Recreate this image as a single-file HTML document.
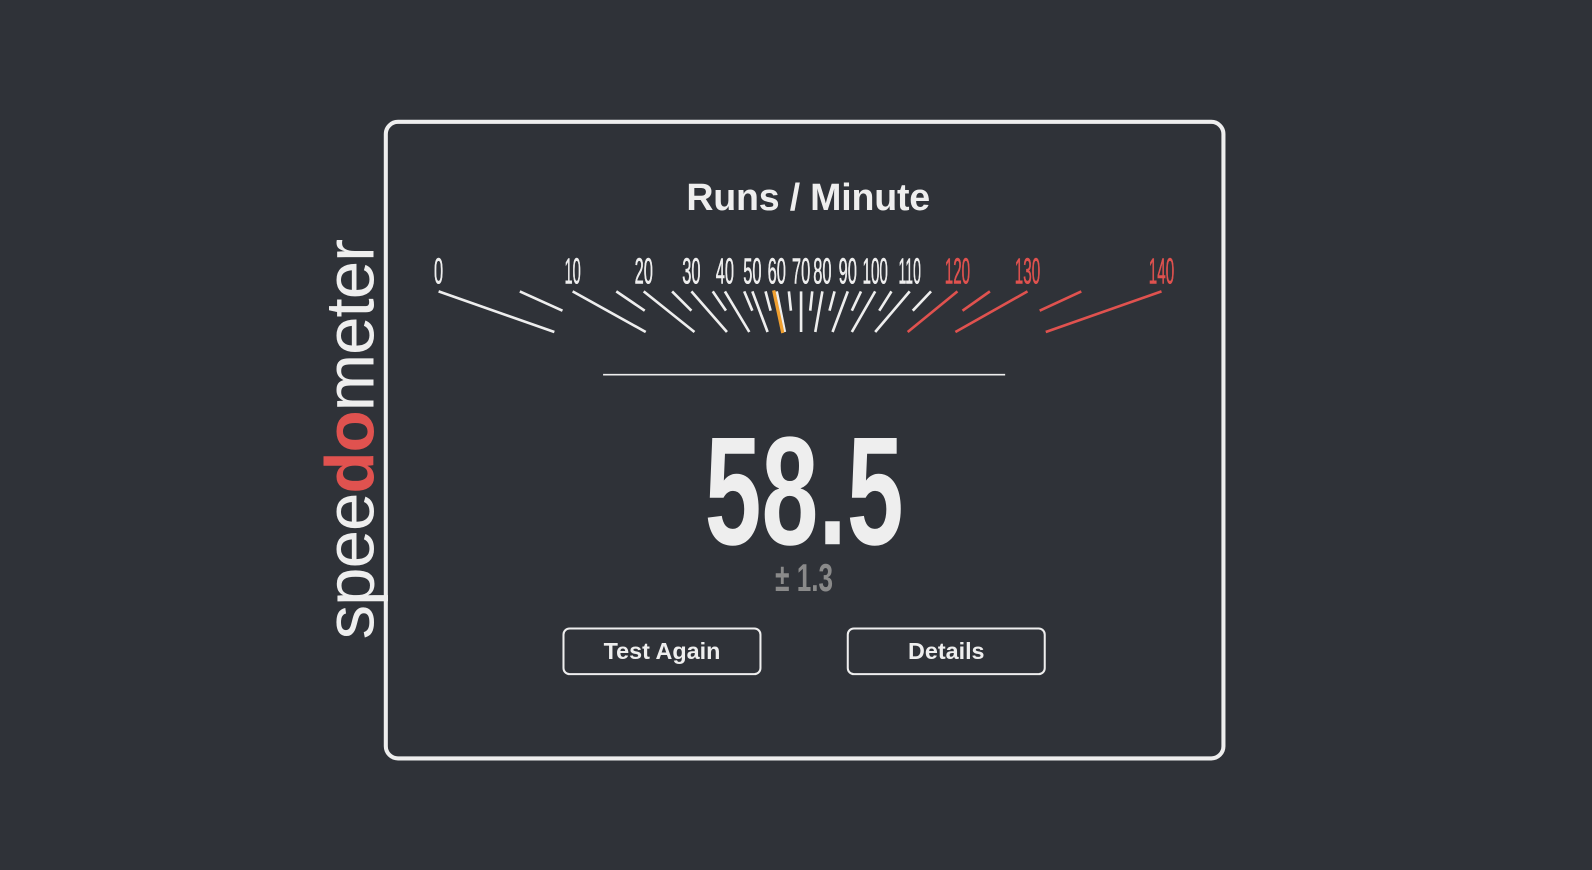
<!DOCTYPE html>
<html><head><meta charset="utf-8"><style>
html,body{margin:0;padding:0;background:#2f3238;width:1592px;height:857px;overflow:hidden;font-family:"Liberation Sans",sans-serif;}
#w{position:absolute;left:0;top:0;width:1592px;height:857px;transform:scale(1.0153);transform-origin:0 0;}
.box{position:absolute;left:378px;top:118px;width:821px;height:623px;border:4px solid #eeeeee;border-radius:14px;}
.title{position:absolute;left:0;width:1592px;top:174px;text-align:center;color:#eee;font-size:37px;font-weight:bold;letter-spacing:-0.2px;}
.btn{position:absolute;top:618px;width:192px;height:43px;border:2px solid #eee;border-radius:7px;color:#eee;font-size:23px;font-weight:bold;text-align:center;line-height:43px;}
.brand{position:absolute;left:345px;top:433px;transform:translate(-50%,-50%) rotate(-90deg);color:#eee;font-size:68px;white-space:nowrap;letter-spacing:-1px;}
.brand b{color:#e0524f;}
</style></head><body><div id="w">
<div class="box"></div>
<div class="brand">spee<b>do</b>meter</div>
<div class="title">Runs / Minute</div>
<svg width="1592" height="857" style="position:absolute;left:0;top:0">
<g stroke="#eeeeee" stroke-width="2.6" stroke-linecap="butt">
<line x1="432" y1="287" x2="546" y2="327"/>
<line x1="564" y1="287" x2="636" y2="327"/>
<line x1="634" y1="287" x2="684" y2="327"/>
<line x1="681" y1="287" x2="716" y2="327"/>
<line x1="714" y1="287" x2="738" y2="327"/>
<line x1="741" y1="287" x2="756" y2="327"/>
<line x1="765" y1="287" x2="773" y2="327"/>
<line x1="789" y1="287" x2="789" y2="327"/>
<line x1="810" y1="287" x2="803" y2="327"/>
<line x1="835" y1="287" x2="820" y2="327"/>
<line x1="862" y1="287" x2="839" y2="327"/>
<line x1="896" y1="287" x2="862" y2="327"/>
<line x1="512" y1="287" x2="554" y2="306"/>
<line x1="607" y1="287" x2="635" y2="306"/>
<line x1="662" y1="287" x2="681" y2="306"/>
<line x1="702" y1="287" x2="715" y2="306"/>
<line x1="733" y1="287" x2="741" y2="306"/>
<line x1="754" y1="287" x2="759" y2="306"/>
<line x1="777" y1="287" x2="779" y2="306"/>
<line x1="800" y1="287" x2="798" y2="306"/>
<line x1="822" y1="287" x2="817" y2="306"/>
<line x1="848" y1="287" x2="839" y2="306"/>
<line x1="878" y1="287" x2="866" y2="306"/>
<line x1="917" y1="287" x2="899" y2="306"/>
</g>
<g stroke="#e0524f" stroke-width="2.6">
<line x1="943" y1="287" x2="894" y2="327"/>
<line x1="1012" y1="287" x2="941" y2="327"/>
<line x1="1144" y1="287" x2="1030" y2="327"/>
<line x1="975" y1="287" x2="948" y2="306"/>
<line x1="1065" y1="287" x2="1024" y2="306"/>
</g>
<line x1="762" y1="286" x2="771" y2="328" stroke="#f0a030" stroke-width="3.2"/>
<g font-family="Liberation Sans, sans-serif" font-size="36" fill="#eeeeee" stroke="#eeeeee" stroke-width="0.6" text-anchor="middle">
<text x="432" y="279" textLength="9" lengthAdjust="spacingAndGlyphs">0</text>
<text x="564" y="279" textLength="16" lengthAdjust="spacingAndGlyphs">10</text>
<text x="634" y="279" textLength="18" lengthAdjust="spacingAndGlyphs">20</text>
<text x="681" y="279" textLength="18" lengthAdjust="spacingAndGlyphs">30</text>
<text x="714" y="279" textLength="18" lengthAdjust="spacingAndGlyphs">40</text>
<text x="741" y="279" textLength="18" lengthAdjust="spacingAndGlyphs">50</text>
<text x="765" y="279" textLength="18" lengthAdjust="spacingAndGlyphs">60</text>
<text x="789" y="279" textLength="18" lengthAdjust="spacingAndGlyphs">70</text>
<text x="810" y="279" textLength="18" lengthAdjust="spacingAndGlyphs">80</text>
<text x="835" y="279" textLength="18" lengthAdjust="spacingAndGlyphs">90</text>
<text x="862" y="279" textLength="25" lengthAdjust="spacingAndGlyphs">100</text>
<text x="896" y="279" textLength="22" lengthAdjust="spacingAndGlyphs">110</text>
<g fill="#e0524f" stroke="#e0524f">
<text x="943" y="279" textLength="25" lengthAdjust="spacingAndGlyphs">120</text>
<text x="1012" y="279" textLength="25" lengthAdjust="spacingAndGlyphs">130</text>
<text x="1144" y="279" textLength="25" lengthAdjust="spacingAndGlyphs">140</text>
</g>
</g>
<line x1="594" y1="369" x2="990" y2="369" stroke="#eeeeee" stroke-width="1.6"/>
<text x="792" y="536" font-family="Liberation Sans, sans-serif" font-size="152" font-weight="bold" fill="#eeeeee" text-anchor="middle" textLength="196" lengthAdjust="spacingAndGlyphs">58.5</text>
<text x="792" y="582" font-family="Liberation Sans, sans-serif" font-size="38" font-weight="bold" fill="#8a8a8a" text-anchor="middle" textLength="57" lengthAdjust="spacingAndGlyphs">± 1.3</text>
</svg>
<div class="btn" style="left:554px">Test Again</div>
<div class="btn" style="left:834px">Details</div>
</div></body></html>
